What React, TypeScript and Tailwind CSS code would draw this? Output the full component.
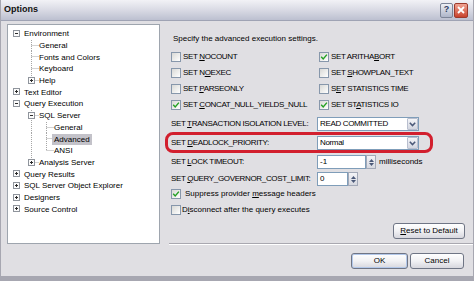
import React from 'react';

type TreeNode = {
  label: string;
  level: number;
  exp?: '+' | '-';
  last?: boolean;
  cont?: number[];
  selected?: boolean;
};

const tree: TreeNode[] = [
  { label: 'Environment', level: 0, exp: '-' },
  { label: 'General', level: 1 },
  { label: 'Fonts and Colors', level: 1 },
  { label: 'Keyboard', level: 1 },
  { label: 'Help', level: 1, exp: '+', last: true },
  { label: 'Text Editor', level: 0, exp: '+' },
  { label: 'Query Execution', level: 0, exp: '-' },
  { label: 'SQL Server', level: 1, exp: '-' },
  { label: 'General', level: 2, cont: [1] },
  { label: 'Advanced', level: 2, cont: [1], selected: true },
  { label: 'ANSI', level: 2, cont: [1], last: true },
  { label: 'Analysis Server', level: 1, exp: '+', last: true },
  { label: 'Query Results', level: 0, exp: '+' },
  { label: 'SQL Server Object Explorer', level: 0, exp: '+' },
  { label: 'Designers', level: 0, exp: '+' },
  { label: 'Source Control', level: 0, exp: '+' },
];

const ROW = 11.7;
const cx = (l: number) => 8.5 + 15 * l;
const LINE = '#a6a6a6';

function TreeRow({ node }: { node: TreeNode }) {
  const x = cx(node.level);
  const mid = 5.5;
  return (
    <div className="flex h-[11.7px] items-center">
      <svg width={x + 7.5} height={ROW} className="shrink-0">
        {(node.cont ?? []).map((k) => (
          <line key={k} x1={cx(k)} y1={0} x2={cx(k)} y2={ROW} stroke={LINE} strokeDasharray="1 1" />
        ))}
        {node.level > 0 && (
          <>
            <line x1={x} y1={0} x2={x} y2={node.last ? mid : ROW} stroke={LINE} strokeDasharray="1 1" />
            <line x1={x} y1={mid} x2={x + 7} y2={mid} stroke={LINE} strokeDasharray="1 1" />
          </>
        )}
        {node.exp && (
          <g>
            <rect x={x - 3} y={mid - 3} width={6} height={6} fill="#fbfbfb" stroke="#8f949c" />
            <line x1={x - 1.5} y1={mid} x2={x + 1.5} y2={mid} stroke="#2b2b2b" />
            {node.exp === '+' && <line x1={x} y1={mid - 1.5} x2={x} y2={mid + 1.5} stroke="#2b2b2b" />}
          </g>
        )}
      </svg>
      <span className={node.selected ? 'bg-[#c3c2c9] px-[2px] -ml-[2px] leading-[11px]' : 'leading-[11px]'}>
        {node.label}
      </span>
    </div>
  );
}

function Check({ checked }: { checked?: boolean }) {
  return (
    <span className="w-[10px] h-[10px] shrink-0 border border-[#8797ab] bg-linear-to-br from-[#d9d9d6] to-white flex items-center justify-center">
      {checked && (
        <svg width="8" height="8" viewBox="0 0 8 8">
          <path d="M1.2 3.8 L3.2 5.9 L6.9 1.6" fill="none" stroke="#22a022" strokeWidth="1.4" />
        </svg>
      )}
    </span>
  );
}

// underlined access key
const K = ({ children }: { children: React.ReactNode }) => (
  <u className="underline-offset-[1px] decoration-[0.8px]">{children}</u>
);

function CheckItem({ checked, children }: { checked?: boolean; children: React.ReactNode }) {
  return (
    <div className="flex items-center gap-[2px] h-[16px]">
      <Check checked={checked} />
      <span className="tracking-[-0.35px] whitespace-nowrap">{children}</span>
    </div>
  );
}

function Select({ value }: { value: string }) {
  return (
    <div className="w-[102px] h-[14px] border border-[#7f9db9] bg-white flex items-center justify-between">
      <span className="pl-[2px] tracking-[-0.35px]">{value}</span>
      <span className="w-[11px] h-[12px] bg-linear-to-b from-[#f4f5f8] to-[#d3d6e0] border border-[#b9bfcf] rounded-[1px] flex items-center justify-center">
        <svg width="7" height="5" viewBox="0 0 7 5">
          <path d="M0.8 0.8 L3.5 3.6 L6.2 0.8" fill="none" stroke="#4a5878" strokeWidth="1.5" />
        </svg>
      </span>
    </div>
  );
}

function Spin({ value, width }: { value: string; width: string }) {
  return (
    <div className="flex h-[14px]">
      <div className={`${width} h-full border border-[#7f9db9] bg-white pl-[2px] flex items-center`}>{value}</div>
      <div className="w-[10px] h-full border border-[#a3a9b8] bg-linear-to-b from-[#f4f4f7] to-[#d6d8e0] flex flex-col items-center justify-center gap-[1px]">
        <svg width="5" height="3" viewBox="0 0 5 3">
          <path d="M0 3 L2.5 0 L5 3 Z" fill="#4a5878" />
        </svg>
        <svg width="5" height="3" viewBox="0 0 5 3">
          <path d="M0 0 L2.5 3 L5 0 Z" fill="#4a5878" />
        </svg>
      </div>
    </div>
  );
}

function Btn({ children, width, def }: { children: React.ReactNode; width: string; def?: boolean }) {
  return (
    <div
      className={`${width} h-[16px] rounded-[3px] border border-[#6f7585] bg-linear-to-b from-white via-[#f1f1f4] to-[#d7d7de] flex items-center justify-center ${
        def ? 'shadow-[inset_0_0_0_1px_#b3c8ea]' : ''
      }`}
    >
      {children}
    </div>
  );
}

function LabelRow({ label, children, className }: { label: React.ReactNode; children: React.ReactNode; className?: string }) {
  return (
    <div className={`flex items-center h-[14px] ${className ?? ''}`}>
      <span className="w-[146px] tracking-[-0.35px] whitespace-nowrap">{label}</span>
      {children}
    </div>
  );
}

export default function App() {
  return (
    <div className="w-[474px] h-[281px] overflow-hidden bg-[#e0dfe3] font-['Liberation_Sans',Arial,sans-serif] text-[8px] text-black flex flex-col border-x border-b-[5px] border-[#a7a7b1]">
      {/* Title bar */}
      <div className="h-[21px] shrink-0 bg-linear-to-b from-[#f2f2f6] via-[#d9dae4] to-[#bcc0d0] border-b border-[#9fa3b4] flex items-center justify-between pl-[3px] pr-[5px]">
        <span className="font-bold text-[9px] text-[#111]">Options</span>
        <div className="flex gap-[1px]">
          <div className="w-[13px] h-[15px] rounded-[2px] border border-[#7d8598] bg-linear-to-b from-[#eef0f5] to-[#aeb5c9] flex items-center justify-center text-[9px] font-bold text-[#2f3d63]">
            ?
          </div>
          <div className="w-[14px] h-[15px] rounded-[2px] border border-[#9d3a2c] bg-linear-to-b from-[#f0a393] to-[#c8412c] flex items-center justify-center">
            <svg width="8" height="8" viewBox="0 0 8 8">
              <path d="M1 1 L7 7 M7 1 L1 7" stroke="white" strokeWidth="1.8" />
            </svg>
          </div>
        </div>
      </div>

      <div className="flex flex-1">
        {/* Tree */}
        <div className="ml-[6px] mt-[3px] w-[153px] h-[220px] shrink-0 border border-[#9ea5ae] bg-white pt-[3px]">
          {tree.map((n, i) => (
            <TreeRow key={i} node={n} />
          ))}
        </div>

        {/* Settings */}
        <div className="ml-[11px] flex-1 flex flex-col">
          <div className="mt-[12px] h-[12px] leading-[12px] pl-[2px]">Specify the advanced execution settings.</div>

          <div className="mt-[4px] grid grid-cols-[148px_1fr]">
            <CheckItem>SET <K>N</K>OCOUNT</CheckItem>
            <CheckItem checked>SET ARITHA<K>B</K>ORT</CheckItem>
            <CheckItem>SET N<K>O</K>EXEC</CheckItem>
            <CheckItem>SET <K>S</K>HOWPLAN_TEXT</CheckItem>
            <CheckItem>SET <K>P</K>ARSEONLY</CheckItem>
            <CheckItem>S<K>E</K>T STATISTICS TIME</CheckItem>
            <CheckItem checked>SET <K>C</K>ONCAT_NULL_YIELDS_NULL</CheckItem>
            <CheckItem checked>SET ST<K>A</K>TISTICS IO</CheckItem>
          </div>

          <LabelRow className="mt-[4px]" label={<>SET <K>T</K>RANSACTION ISOLATION LEVEL:</>}>
            <Select value="READ COMMITTED" />
          </LabelRow>

          <div className="relative mt-[5px]">
            <LabelRow label={<>SET <K>D</K>EADLOCK_PRIORITY:</>}>
              <Select value="Normal" />
            </LabelRow>
            <div className="absolute -left-[6px] -top-[4px] w-[268px] h-[21px] border-[3px] border-[#d21f2e] rounded-[8px]" />
          </div>

          <LabelRow className="mt-[5px]" label={<>SET <K>L</K>OCK TIMEOUT:</>}>
            <Spin value="-1" width="w-[49px]" />
            <span className="ml-[3px]">milliseconds</span>
          </LabelRow>

          <LabelRow className="mt-[3px]" label={<>SET <K>Q</K>UERY_GOVERNOR_COST_LIMIT:</>}>
            <Spin value="0" width="w-[31px]" />
          </LabelRow>

          <div className="flex items-center gap-[4px] h-[16px]">
            <Check checked />
            <span>Suppress provider <K>m</K>essage headers</span>
          </div>
          <div className="flex items-center gap-[1px] h-[16px]">
            <Check />
            <span>D<K>i</K>sconnect after the query executes</span>
          </div>

          <div className="mt-[5px] flex justify-end pr-[8px]">
            <Btn width="w-[72px]">
              <span><K>R</K>eset to Default</span>
            </Btn>
          </div>

          <div className="mt-[4px] -ml-[2px] h-[2px] border-t border-[#a9a8b0] border-b border-b-white" />

          <div className="mt-[8px] flex justify-end gap-[2px] pr-[9px]">
            <Btn width="w-[57px]" def>
              OK
            </Btn>
            <Btn width="w-[54px]">Cancel</Btn>
          </div>
        </div>
      </div>
    </div>
  );
}
